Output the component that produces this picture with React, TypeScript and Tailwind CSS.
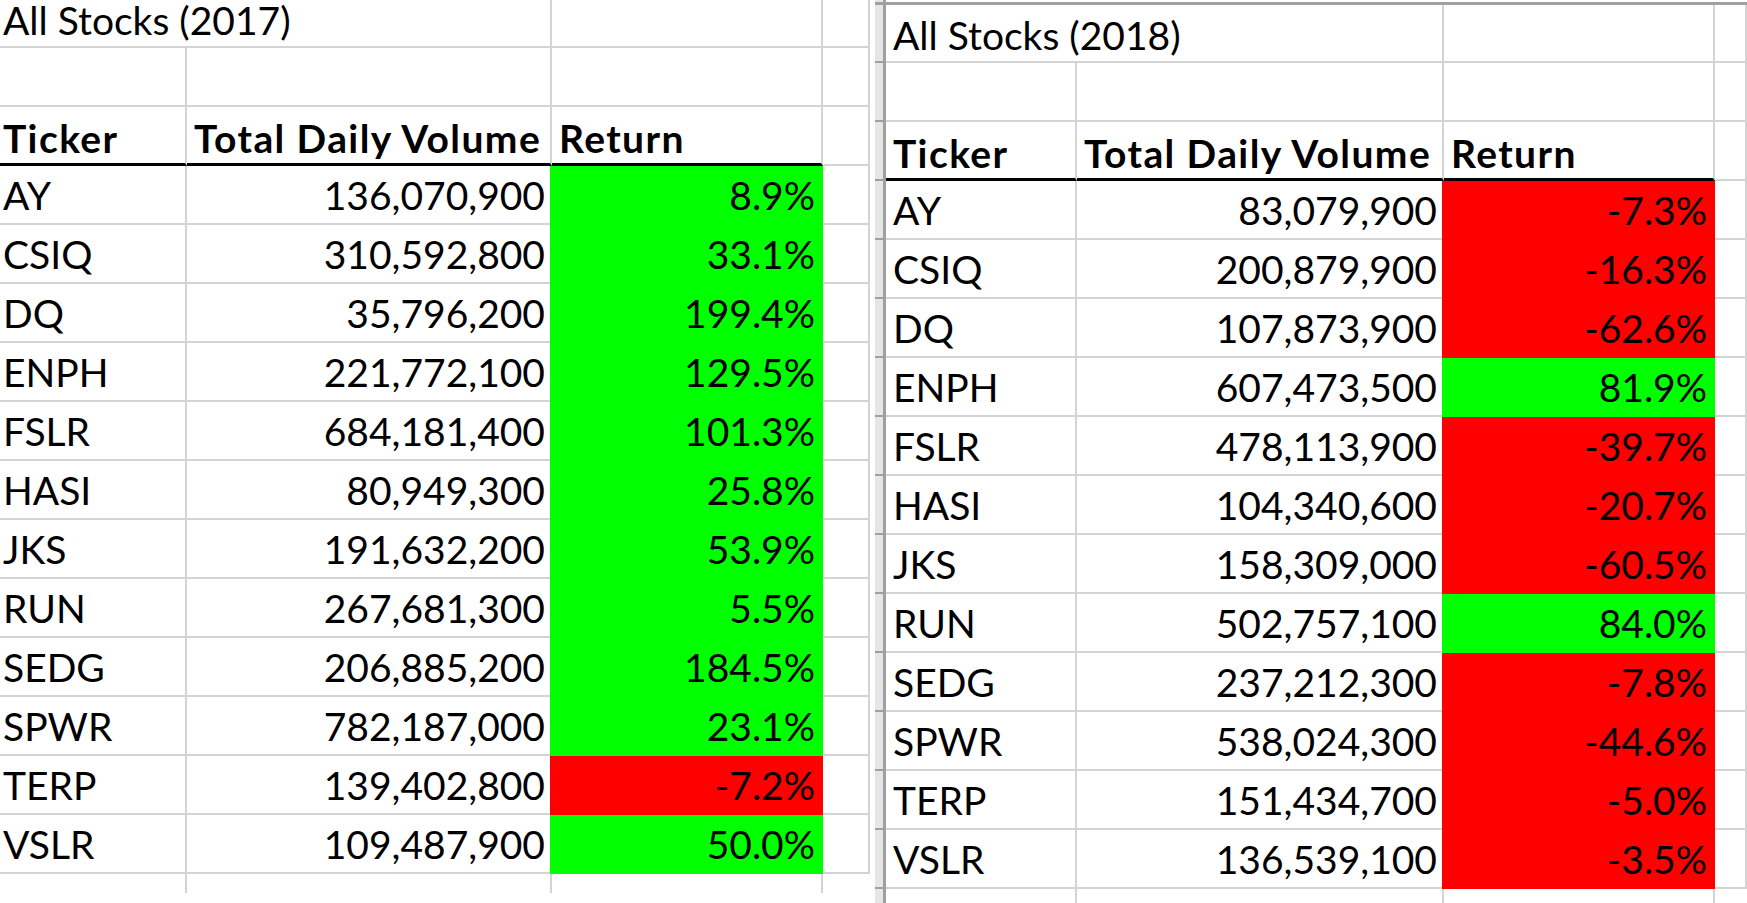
import React from 'react';

type Stock = { ticker: string; volume: string; ret: string };

const stocks2017: Stock[] = [
    { ticker: 'AY', volume: '136,070,900', ret: '8.9%' },
    { ticker: 'CSIQ', volume: '310,592,800', ret: '33.1%' },
    { ticker: 'DQ', volume: '35,796,200', ret: '199.4%' },
    { ticker: 'ENPH', volume: '221,772,100', ret: '129.5%' },
    { ticker: 'FSLR', volume: '684,181,400', ret: '101.3%' },
    { ticker: 'HASI', volume: '80,949,300', ret: '25.8%' },
    { ticker: 'JKS', volume: '191,632,200', ret: '53.9%' },
    { ticker: 'RUN', volume: '267,681,300', ret: '5.5%' },
    { ticker: 'SEDG', volume: '206,885,200', ret: '184.5%' },
    { ticker: 'SPWR', volume: '782,187,000', ret: '23.1%' },
    { ticker: 'TERP', volume: '139,402,800', ret: '-7.2%' },
    { ticker: 'VSLR', volume: '109,487,900', ret: '50.0%' },
];

const stocks2018: Stock[] = [
    { ticker: 'AY', volume: '83,079,900', ret: '-7.3%' },
    { ticker: 'CSIQ', volume: '200,879,900', ret: '-16.3%' },
    { ticker: 'DQ', volume: '107,873,900', ret: '-62.6%' },
    { ticker: 'ENPH', volume: '607,473,500', ret: '81.9%' },
    { ticker: 'FSLR', volume: '478,113,900', ret: '-39.7%' },
    { ticker: 'HASI', volume: '104,340,600', ret: '-20.7%' },
    { ticker: 'JKS', volume: '158,309,000', ret: '-60.5%' },
    { ticker: 'RUN', volume: '502,757,100', ret: '84.0%' },
    { ticker: 'SEDG', volume: '237,212,300', ret: '-7.8%' },
    { ticker: 'SPWR', volume: '538,024,300', ret: '-44.6%' },
    { ticker: 'TERP', volume: '151,434,700', ret: '-5.0%' },
    { ticker: 'VSLR', volume: '136,539,100', ret: '-3.5%' },
];

// Excel-ish cell: text sits near the bottom of the row
const box = 'flex items-end border-r-2 border-b-2 whitespace-nowrap shrink-0';
const cell = `${box} pb-[4px] border-[#d4d4d4]`;
const titleCell = `${box} pb-[6px] leading-[39px] border-[#d4d4d4]`;
const headCell = 'flex items-end pb-[1px] border-r-2 border-b-[3px] border-r-[#d4d4d4] border-b-black whitespace-nowrap shrink-0 font-bold tracking-[1.4px]';
const greenCell = `${box} pb-[4px] bg-[#00ff00] border-[#00ff00]`;
const redCell = `${box} pb-[4px] bg-[#ff0000] border-[#ff0000]`;

interface SheetProps {
    title: string;
    rows: Stock[];
    colB: string;      // width class of volume column
    titleSpan: string; // width class of A+B overflow
    colD: string;      // width class of the trailing column
    titleH: string;
    strip?: boolean;
    tail: string;      // height class of the partial row below
}

const Strip: React.FC<{ h?: string }> = ({ h = 'h-[59px]' }) => (
    <div className={`${h} w-[11px] shrink-0 bg-[#e6e6e6] border-r-[3px] border-b-2 border-[#a0a0a0]`} />
);

const Sheet: React.FC<SheetProps> = ({ title, rows, colB, titleSpan, colD, titleH, strip, tail }) => (
    <div className="flex flex-col">
        {/* title row */}
        <div className={`flex ${titleH}`}>
            {strip && <Strip h={titleH} />}
            <div className={`${titleCell} ${titleSpan} pl-[7px]`}>{title}</div>
            <div className={`${cell} w-[271px]`} />
            <div className={`${cell} ${colD} border-r-0`} />
        </div>
        {/* empty row */}
        <div className="flex h-[59px]">
            {strip && <Strip />}
            <div className={`${cell} w-[191px]`} />
            <div className={`${cell} ${colB}`} />
            <div className={`${cell} w-[271px]`} />
            <div className={`${cell} ${colD} border-r-0`} />
        </div>
        {/* header */}
        <div className="flex h-[59px]">
            {strip && <Strip />}
            <div className={`${headCell} w-[191px] pl-[7px]`}>Ticker</div>
            <div className={`${headCell} ${colB} pl-[7px]`}>Total Daily Volume</div>
            <div className={`${headCell} w-[271px] pl-[7px]`}>Return</div>
            <div className={`${cell} ${colD} border-r-0`} />
        </div>
        {rows.map(r => {
            const up = !r.ret.startsWith('-');
            return (
                <div key={r.ticker} className="flex h-[59px]">
                    {strip && <Strip />}
                    <div className={`${cell} w-[191px] pl-[7px]`}>{r.ticker}</div>
                    <div className={`${cell} ${colB} justify-end pr-[5px]`}>{r.volume}</div>
                    <div className={`${up ? greenCell : redCell} -ml-[2px] w-[273px] justify-end pr-[6px]`}>
                        {r.ret}
                    </div>
                    <div className={`${cell} ${colD} border-r-0`} />
                </div>
            );
        })}
        {/* partial row under the table */}
        <div className={`flex ${tail}`}>
            {strip && <div className="w-[11px] shrink-0 bg-[#e6e6e6] border-r-[3px] border-[#a0a0a0]" />}
            <div className="w-[191px] shrink-0 border-r-2 border-[#d4d4d4]" />
            <div className={`${colB} shrink-0 border-r-2 border-[#d4d4d4]`} />
            <div className="w-[271px] shrink-0 border-r-2 border-[#d4d4d4]" />
        </div>
    </div>
);

export default function App() {
    return (
        <div className="w-[1747px] h-[903px] overflow-hidden bg-white flex font-['Lato',sans-serif] text-black text-[39px] leading-[47px]">
            {/* 2017 sheet, column A cut at the left edge */}
            <div className="w-[879px] shrink-0 -ml-[4px] -mt-[11px]">
                <Sheet
                    title="All Stocks (2017)"
                    rows={stocks2017}
                    colB="w-[365px]"
                    titleSpan="w-[556px]"
                    colD="w-[47px]"
                    titleH="h-[59px]"
                    tail="h-[19px]"
                />
            </div>

            {/* 2018 sheet in a second window */}
            <div className="flex-1 flex flex-col">
                <div className="flex h-[5px] shrink-0">
                    <div className="w-[11px] shrink-0 bg-[#e6e6e6] border-r-[3px] border-b-[3px] border-[#a0a0a0]" />
                    <div className="flex-1 border-b-[3px] border-[#a0a0a0]" />
                </div>
                <Sheet
                    title="All Stocks (2018)"
                    rows={stocks2018}
                    colB="w-[367px]"
                    titleSpan="w-[558px]"
                    colD="flex-1"
                    titleH="h-[58px]"
                    strip
                    tail="h-[20px]"
                />
            </div>
        </div>
    );
}
